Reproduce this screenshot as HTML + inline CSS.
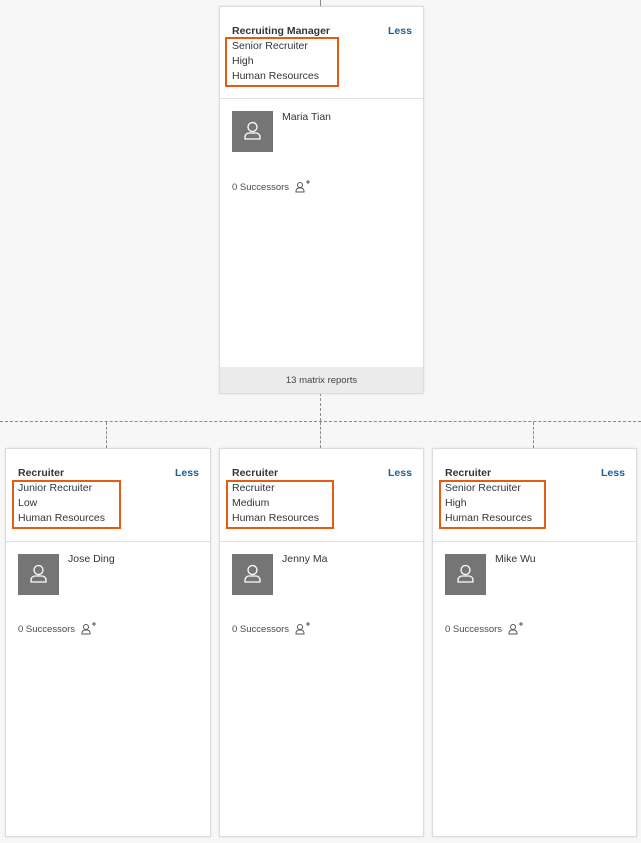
<!DOCTYPE html>
<html><head><style>
body{margin:0;width:641px;height:843px;background:#f7f7f7;position:relative;overflow:hidden;font-family:"Liberation Sans",sans-serif;color:#32363a}
.card{position:absolute;background:#fff;border:1px solid #dcdcdc;box-sizing:border-box;box-shadow:0 0 2px rgba(0,0,0,.1)}
.t{position:absolute;font-size:10.5px;font-weight:bold;color:#32363a}
.l{position:absolute;font-size:10.5px;color:#32363a;line-height:15px}
.less{position:absolute;font-size:10.5px;font-weight:bold;color:#1d5f93}
.box{position:absolute;border:2px solid #e35c0f;box-sizing:border-box}
.div{position:absolute;left:0;right:0;height:1px;background:#e0e0e0}
.av{position:absolute;width:41px;height:41px;background:#757575}
.nm{position:absolute;font-size:10.5px;color:#32363a}
.sc{position:absolute;font-size:9.5px;color:#4a4a4a}
.vd{position:absolute;width:0;border-left:1px dashed #8a8a8a}
</style></head><body>
<div class="vd" style="left:320px;top:0;height:6px"></div>
<div class="vd" style="left:320px;top:393px;height:28px"></div>
<div style="position:absolute;left:0;right:0;top:421px;border-top:1px dashed #8a8a8a"></div>
<div class="vd" style="left:106px;top:422px;height:26px"></div>
<div class="vd" style="left:320px;top:422px;height:26px"></div>
<div class="vd" style="left:533px;top:422px;height:26px"></div>

<div class="card" style="left:219px;top:6px;width:205px;height:388px">
 <div class="t" style="left:12px;top:18px">Recruiting Manager</div>
 <div class="less" style="left:168px;top:18px">Less</div>
 <div class="box" style="left:5px;top:30px;width:114px;height:50px"></div>
 <div class="l" style="left:12px;top:32px">Senior Recruiter<br>High<br>Human Resources</div>
 <div class="div" style="top:91px"></div>
 <div class="av" style="left:12px;top:104px"><svg width="41" height="41"><circle cx="20.5" cy="16" r="4.5" fill="none" stroke="#fff" stroke-width="1.3"/><path d="M13 28v-2a4 4 0 0 1 4-4h7a4 4 0 0 1 4 4v2z" fill="none" stroke="#fff" stroke-width="1.3"/></svg></div>
 <div class="nm" style="left:62px;top:104px">Maria Tian</div>
 <div class="sc" style="left:12px;top:172px">0 Successors <svg width="16" height="14" style="vertical-align:-3px;margin-left:3px"><circle cx="5" cy="6" r="2.5" fill="none" stroke="#555"/><path d="M1 13v-1a3 3 0 0 1 3-3h2a3 3 0 0 1 3 3v1z" fill="none" stroke="#555"/><path d="M11 3h4M13 1v4" stroke="#555"/></svg></div>
 <div style="position:absolute;left:0;right:0;bottom:0;height:26px;background:#ebebeb;font-size:9.5px;text-align:center;line-height:28px;color:#444">13 matrix reports</div>
</div>

<div class="card" style="left:5px;top:448px;width:206px;height:389px">
 <div class="t" style="left:12px;top:18px">Recruiter</div>
 <div class="less" style="left:169px;top:18px">Less</div>
 <div class="box" style="left:6px;top:31px;width:109px;height:49px"></div>
 <div class="l" style="left:12px;top:32px">Junior Recruiter<br>Low<br>Human Resources</div>
 <div class="div" style="top:92px"></div>
 <div class="av" style="left:12px;top:105px"><svg width="41" height="41"><circle cx="20.5" cy="16" r="4.5" fill="none" stroke="#fff" stroke-width="1.3"/><path d="M13 28v-2a4 4 0 0 1 4-4h7a4 4 0 0 1 4 4v2z" fill="none" stroke="#fff" stroke-width="1.3"/></svg></div>
 <div class="nm" style="left:62px;top:104px">Jose Ding</div>
 <div class="sc" style="left:12px;top:172px">0 Successors <svg width="16" height="14" style="vertical-align:-3px;margin-left:3px"><circle cx="5" cy="6" r="2.5" fill="none" stroke="#555"/><path d="M1 13v-1a3 3 0 0 1 3-3h2a3 3 0 0 1 3 3v1z" fill="none" stroke="#555"/><path d="M11 3h4M13 1v4" stroke="#555"/></svg></div>
</div>

<div class="card" style="left:219px;top:448px;width:205px;height:389px">
 <div class="t" style="left:12px;top:18px">Recruiter</div>
 <div class="less" style="left:168px;top:18px">Less</div>
 <div class="box" style="left:6px;top:31px;width:108px;height:49px"></div>
 <div class="l" style="left:12px;top:32px">Recruiter<br>Medium<br>Human Resources</div>
 <div class="div" style="top:92px"></div>
 <div class="av" style="left:12px;top:105px"><svg width="41" height="41"><circle cx="20.5" cy="16" r="4.5" fill="none" stroke="#fff" stroke-width="1.3"/><path d="M13 28v-2a4 4 0 0 1 4-4h7a4 4 0 0 1 4 4v2z" fill="none" stroke="#fff" stroke-width="1.3"/></svg></div>
 <div class="nm" style="left:62px;top:104px">Jenny Ma</div>
 <div class="sc" style="left:12px;top:172px">0 Successors <svg width="16" height="14" style="vertical-align:-3px;margin-left:3px"><circle cx="5" cy="6" r="2.5" fill="none" stroke="#555"/><path d="M1 13v-1a3 3 0 0 1 3-3h2a3 3 0 0 1 3 3v1z" fill="none" stroke="#555"/><path d="M11 3h4M13 1v4" stroke="#555"/></svg></div>
</div>

<div class="card" style="left:432px;top:448px;width:205px;height:389px">
 <div class="t" style="left:12px;top:18px">Recruiter</div>
 <div class="less" style="left:168px;top:18px">Less</div>
 <div class="box" style="left:6px;top:31px;width:107px;height:49px"></div>
 <div class="l" style="left:12px;top:32px">Senior Recruiter<br>High<br>Human Resources</div>
 <div class="div" style="top:92px"></div>
 <div class="av" style="left:12px;top:105px"><svg width="41" height="41"><circle cx="20.5" cy="16" r="4.5" fill="none" stroke="#fff" stroke-width="1.3"/><path d="M13 28v-2a4 4 0 0 1 4-4h7a4 4 0 0 1 4 4v2z" fill="none" stroke="#fff" stroke-width="1.3"/></svg></div>
 <div class="nm" style="left:62px;top:104px">Mike Wu</div>
 <div class="sc" style="left:12px;top:172px">0 Successors <svg width="16" height="14" style="vertical-align:-3px;margin-left:3px"><circle cx="5" cy="6" r="2.5" fill="none" stroke="#555"/><path d="M1 13v-1a3 3 0 0 1 3-3h2a3 3 0 0 1 3 3v1z" fill="none" stroke="#555"/><path d="M11 3h4M13 1v4" stroke="#555"/></svg></div>
</div>
</body></html>
